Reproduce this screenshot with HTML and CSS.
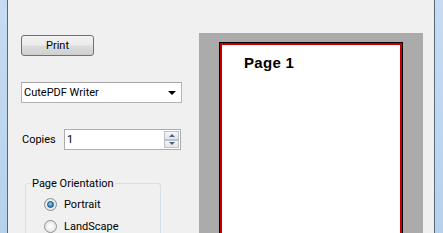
FILE: index.html
```html
<!DOCTYPE html>
<html lang="en">
  <head>
    <meta charset="UTF-8" />
    <title>Print Preview</title>
    <link rel="stylesheet" href="styles.css">
  </head>
  <body>
    <div class="window">
      <div class="frame frame-left"></div>

      <div class="client">
        <!-- Left column: print options -->
        <div class="controls">
          <button class="btn">Print</button>

          <div class="combo">
            <span>CutePDF Writer</span>
            <span class="arrow"></span>
          </div>

          <div class="copies">
            <label>Copies</label>
            <div class="spin-box">
              <span class="value">1</span>
              <div class="spin">
                <span class="spin-btn up"></span>
                <span class="spin-btn down"></span>
              </div>
            </div>
          </div>

          <fieldset class="group">
            <legend>Page Orientation</legend>
            <label class="radio checked"><span class="dot"></span>Portrait</label>
            <label class="radio"><span class="dot"></span>LandScape</label>
          </fieldset>
        </div>

        <!-- Right column: page preview -->
        <div class="preview">
          <div class="page">
            <div class="page-inner">Page 1</div>
          </div>
        </div>
      </div>

      <div class="frame frame-right"></div>
    </div>
  </body>
</html>
```

FILE: styles.css
```css
html,
body {
  margin: 0;
  padding: 0;
  overflow: hidden;
}
body {
  font-family: Roboto, "Liberation Sans", sans-serif;
  font-size: 11px;
  color: #000;
}
.window {
  display: flex;
  width: 443px;
  height: 233px;
  overflow: hidden;
}
.frame {
  width: 7px;
  background: linear-gradient(#c7dcf2, #b7d1ec);
}
.frame-left {
  border-right: 1px solid #56687c;
}
.frame-right {
  border-left: 1px solid #56687c;
  width: 8px;
}
.client {
  flex: 1;
  display: flex;
  background-color: #f0f0f0;
}
.controls {
  width: 191px;
  box-sizing: border-box;
  padding: 35px 0 0 13px;
}
.btn {
  display: block;
  width: 73px;
  height: 21px;
  padding: 0;
  border: 1px solid #707070;
  border-radius: 3px;
  background: linear-gradient(#f2f2f2 0%, #ebebeb 48%, #dddddd 52%, #cfcfcf 100%);
  font-family: Roboto, "Liberation Sans", sans-serif;
  font-size: 11px;
  color: #000;
}
.combo {
  margin-top: 26px;
  width: 161px;
  height: 21px;
  box-sizing: border-box;
  border: 1px solid #b4b4b4;
  border-top-color: #a4a4a4;
  background: #fff;
  display: flex;
  align-items: center;
  padding-left: 2px;
}
.arrow {
  margin-left: auto;
  margin-right: 5px;
  width: 0;
  height: 0;
  border-top: 4px solid #000;
  border-left: 4px solid transparent;
  border-right: 4px solid transparent;
}
.copies {
  margin-top: 26px;
  display: flex;
  align-items: center;
}
.copies label {
  width: 43px;
  padding-left: 1px;
  box-sizing: border-box;
}
.spin-box {
  width: 117px;
  height: 21px;
  box-sizing: border-box;
  border: 1px solid #abadb3;
  background: #fff;
  display: flex;
  align-items: center;
  padding-left: 2px;
}
.spin-box .value {
  flex: 1;
}
.spin {
  width: 15px;
  height: 17px;
  margin-right: 1px;
  display: flex;
  flex-direction: column;
}
.spin-btn {
  flex: 1;
  border: 1px solid #b9c3cf;
  background: linear-gradient(#f6f6f6, #e4e4e4);
  display: flex;
  align-items: center;
  justify-content: center;
}
.spin-btn::after {
  content: "";
  width: 0;
  height: 0;
  border-left: 3px solid transparent;
  border-right: 3px solid transparent;
}
.spin-btn.up::after {
  border-bottom: 3px solid #4d6185;
}
.spin-btn.down::after {
  border-top: 3px solid #4d6185;
}
.group {
  margin: 27px 0 0 4px;
  width: 136px;
  box-sizing: border-box;
  border: 1px solid #d5dfe5;
  border-radius: 3px;
  padding: 0 5px 10px 5px;
}
.group legend {
  padding: 0 1px;
  line-height: 13px;
}
.radio {
  display: flex;
  align-items: center;
  height: 22px;
  margin-left: 13px;
}
.radio:first-of-type {
  margin-top: 3px;
}
.dot {
  width: 11px;
  height: 11px;
  border: 1px solid #8e8f8f;
  border-radius: 50%;
  background: radial-gradient(#ffffff, #dcdcdc);
  margin-right: 7px;
  display: flex;
  align-items: center;
  justify-content: center;
}
.radio.checked .dot::after {
  content: "";
  width: 5px;
  height: 5px;
  border-radius: 50%;
  background: radial-gradient(circle at 40% 35%, #8ad0f5, #0d5b9c);
  border: 1px solid #1b4a78;
}
.preview {
  margin-top: 33px;
  width: 224px;
  background-color: #ababab;
  padding: 9px 20px 0 20px;
  box-sizing: border-box;
}
.page {
  border: 1px solid #000;
  height: 260px;
}
.page-inner {
  border: 2px solid #c00000;
  height: 100%;
  box-sizing: border-box;
  background: #fff;
  padding: 9px 0 0 22px;
  font-family: "Liberation Sans", Arial, sans-serif;
  font-weight: bold;
  font-size: 15px;
  letter-spacing: 0.3px;
}
```
